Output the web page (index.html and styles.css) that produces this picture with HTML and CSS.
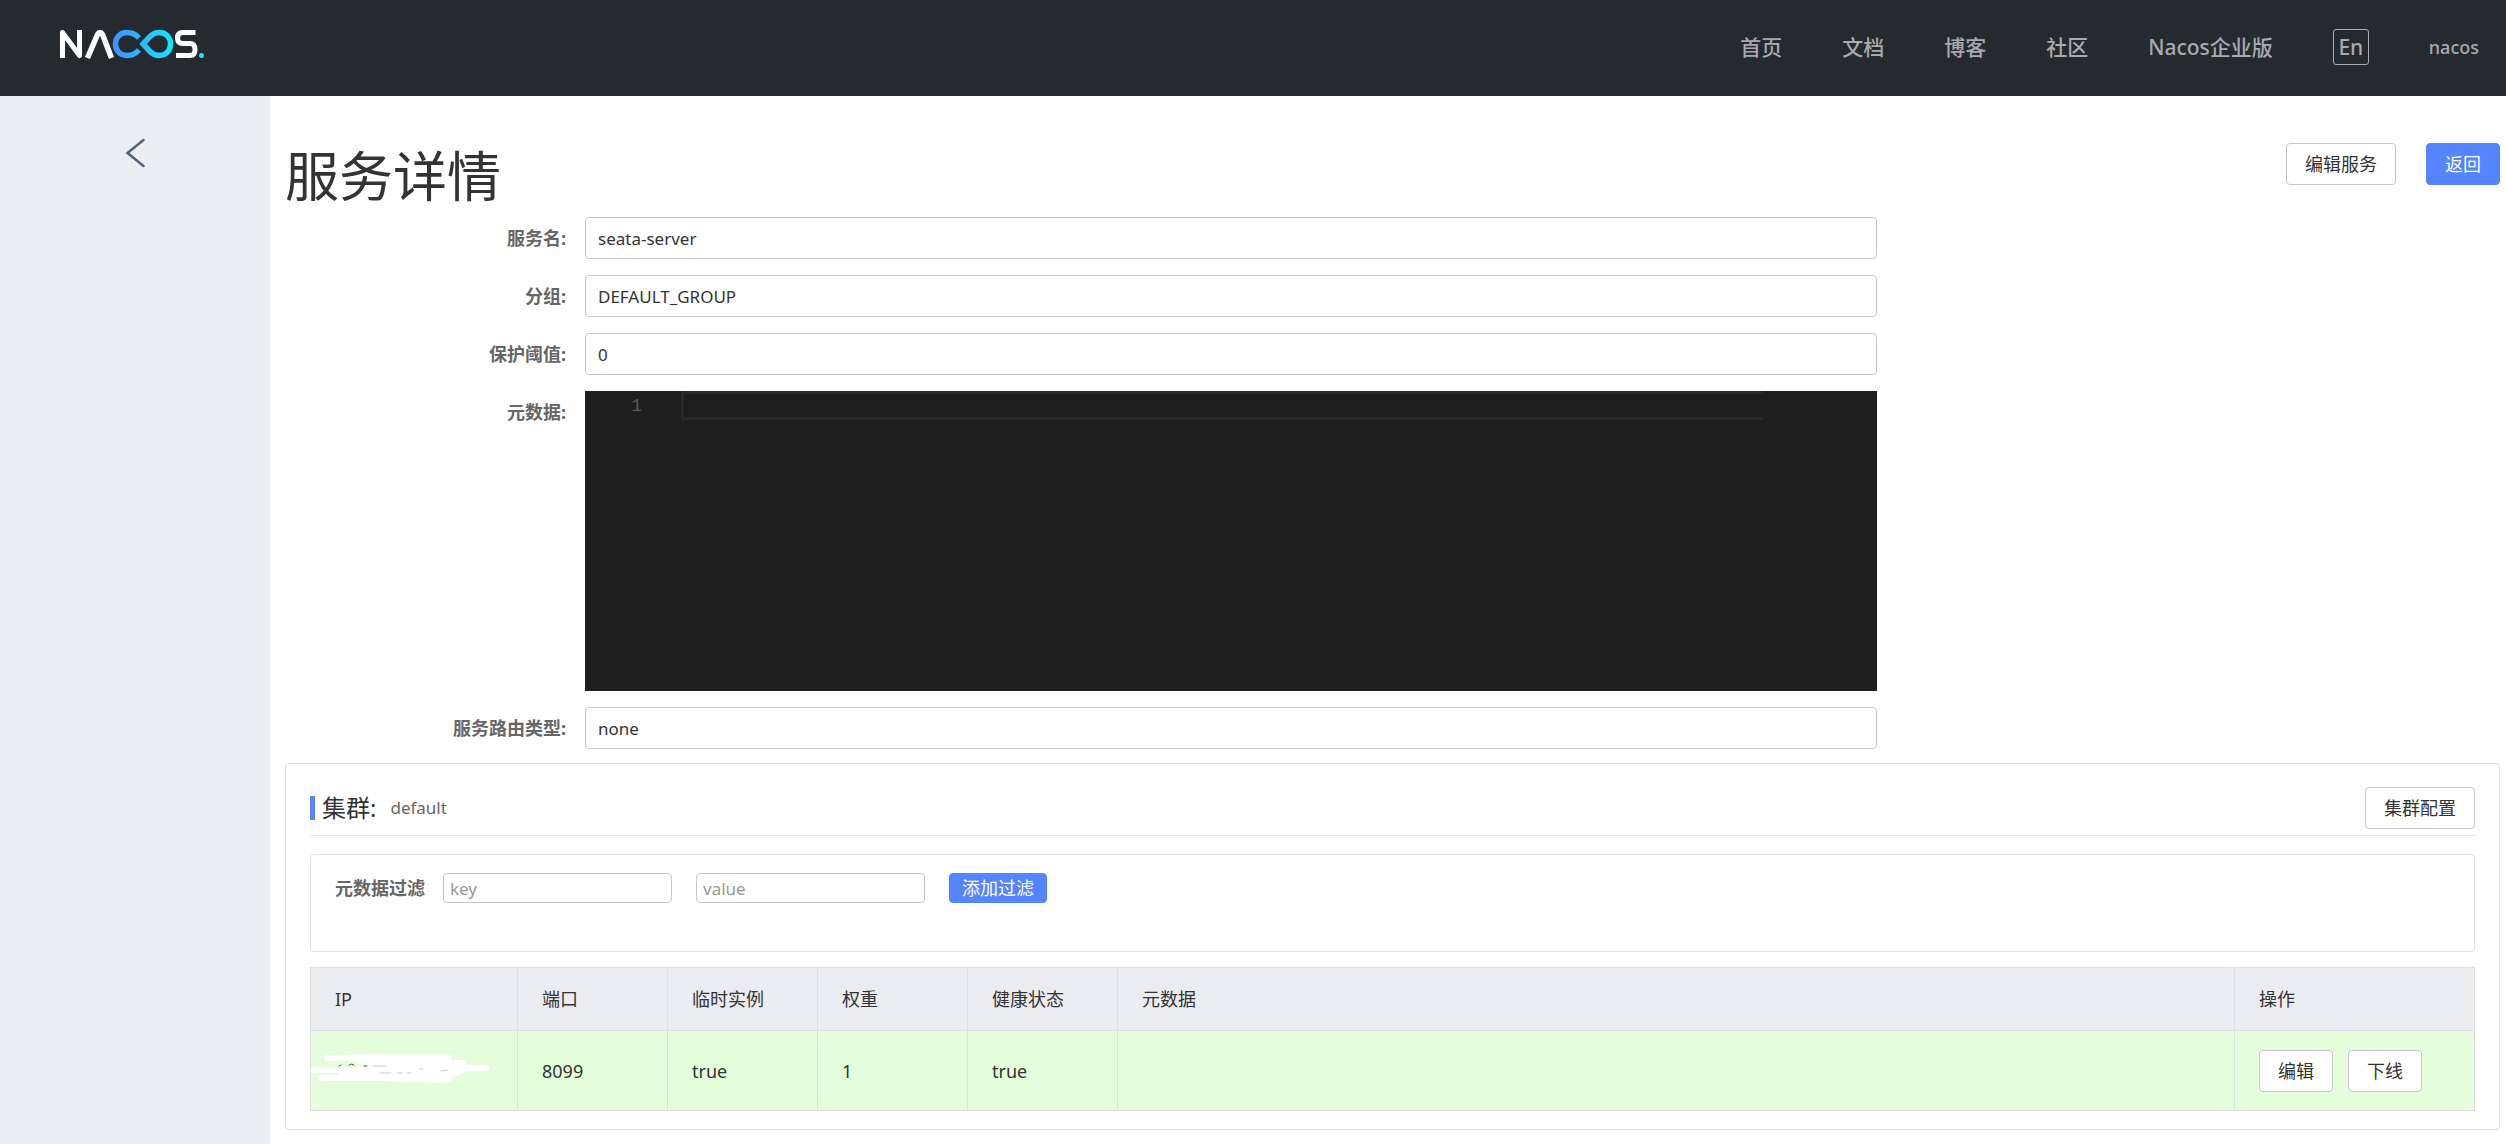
FILE: index.html
```html
<!DOCTYPE html>
<html lang="zh-CN">
<head>
  <meta charset="UTF-8">
  <meta name="viewport" content="width=device-width, initial-scale=1.0">
  <title>Nacos</title>
  <link rel="stylesheet" href="styles.css">
</head>
<body>
  <header class="header">
    <a href="#" class="logo" aria-label="NACOS.">
      <svg width="146" height="32" viewBox="0 0 146 32" fill="none" stroke-width="5">
        <defs>
          <linearGradient id="loop" gradientUnits="userSpaceOnUse" x1="53" y1="0" x2="113" y2="0">
            <stop offset="0" stop-color="#4190ff"/>
            <stop offset="1" stop-color="#16e4fb"/>
          </linearGradient>
        </defs>
        <g stroke="#fff" stroke-linejoin="round">
          <path d="M2.500 30V4.500L19.500 27.500V2"/>
          <path stroke-width="5.500" d="M27.500 30L37.500 6.500Q40 2.500 42.500 6.500L51.500 30"/>
          <path d="M135.500 4.500H123Q117.500 4.500 117.500 10T123 15.500H130Q135 15.500 135 21.500T130 27.500H116"/>
        </g>
        <g stroke="url(#loop)" stroke-width="5.500">
          <path d="M79 10Q74 4.500 67 4.500C59.500 4.500 55.500 10 55.500 16S59.500 27.500 67 27.500Q74 27.500 79 22"/>
          <path d="M83 16L90 8.500Q94 4.500 99 4.500C106.500 4.500 110.500 10 110.500 16S106.500 27.500 99 27.500Q94 27.500 90 23.500Z"/>
        </g>
        <circle cx="141.500" cy="27.500" r="2.500" fill="#16e4fb"/>
      </svg>
    </a>
    <nav class="nav">
      <a href="#">首页</a>
      <a href="#">文档</a>
      <a href="#">博客</a>
      <a href="#">社区</a>
      <a href="#">Nacos企业版</a>
      <button type="button" class="lang">En</button>
      <a href="#" class="user">nacos</a>
    </nav>
  </header>

  <div class="layout">
    <aside class="sidebar">
      <button type="button" class="back" aria-label="返回">
        <svg width="20" height="30" viewBox="0 0 20 30" fill="none" stroke="#546478" stroke-width="2.500" stroke-linecap="round">
          <path d="M18.500 2L2.500 15L18.500 28"/>
        </svg>
      </button>
    </aside>

    <main class="main">
      <div class="title-bar">
        <h1>服务详情</h1>
        <div class="title-actions">
          <button type="button" class="btn">编辑服务</button>
          <button type="button" class="btn btn-primary">返回</button>
        </div>
      </div>

      <form class="form">
        <label for="service-name">服务名:</label>
        <input type="text" id="service-name" value="seata-server" readonly>
        <label for="group-name">分组:</label>
        <input type="text" id="group-name" value="DEFAULT_GROUP" readonly>
        <label for="threshold">保护阈值:</label>
        <input type="text" id="threshold" value="0" readonly>
        <label for="metadata">元数据:</label>
        <div class="editor">
          <span class="line-number">1</span>
          <textarea id="metadata" class="current-line" rows="1" readonly></textarea>
        </div>
        <label for="selector">服务路由类型:</label>
        <input type="text" id="selector" value="none" readonly>
      </form>

      <section class="cluster">
        <div class="cluster-head">
          <h2>集群:</h2>
          <span class="cluster-name">default</span>
          <button type="button" class="btn">集群配置</button>
        </div>

        <form class="filter">
          <label for="filter-key">元数据过滤</label>
          <input type="text" id="filter-key" placeholder="key">
          <input type="text" id="filter-value" placeholder="value" aria-label="value">
          <button type="button" class="btn btn-primary btn-small">添加过滤</button>
        </form>

        <table>
          <colgroup>
            <col class="col-ip">
            <col class="col-small">
            <col class="col-small">
            <col class="col-small">
            <col class="col-small">
            <col>
            <col class="col-actions">
          </colgroup>
          <thead>
            <tr>
              <th>IP</th>
              <th>端口</th>
              <th>临时实例</th>
              <th>权重</th>
              <th>健康状态</th>
              <th>元数据</th>
              <th>操作</th>
            </tr>
          </thead>
          <tbody>
            <tr>
              <td class="ip">
                <svg class="redacted" width="182" height="34" viewBox="0 0 182 34" fill="none" stroke-linecap="round" stroke-linejoin="round">
                  <path fill="#fff" d="M30 6L60 14L28 16V24L100 27L140 26L156 19L162 13L140 10V6Z"/>
                  <path stroke="#fff" stroke-width="6" d="M16 6L70 5L138 5M48 9L110 12L152 11M0 18H30L90 18L176 16M11 26H70L138 28"/>
                  <path stroke="#555" stroke-width="1" d="M28 14L30 13M38 13Q40 11 43 13M53 14H56"/>
                  <path stroke="#ccc" stroke-width="1" d="M62 14H75M69 21H80M86 21H91M96 21H100M109 17H112M130 19L137 18"/>
                </svg>
              </td>
              <td>8099</td>
              <td>true</td>
              <td>1</td>
              <td>true</td>
              <td></td>
              <td>
                <div class="row-actions">
                  <button type="button" class="btn">编辑</button>
                  <button type="button" class="btn">下线</button>
                </div>
              </td>
            </tr>
          </tbody>
        </table>
      </section>
    </main>
  </div>
</body>
</html>
```
FILE: styles.css
```css
* {
  box-sizing: border-box;
}

body {
  display: flex;
  flex-direction: column;
  min-height: 100vh;
  margin: 0;
  font-family: "Noto Sans", "Noto Sans CJK SC", sans-serif;
  font-size: 18px;
  line-height: 24px;
  color: #333;
  background-color: #fff;
}

a {
  color: inherit;
  text-decoration: none;
}

input,
button,
textarea {
  font: inherit;
  color: inherit;
}

/* header */
.header {
  display: flex;
  align-items: center;
  justify-content: space-between;
  height: 96px;
  padding: 0 27px 2px 60px;
  background-color: #252a2f;
}

.logo {
  padding-bottom: 6px;
}

.logo svg {
  display: block;
}

.nav {
  display: flex;
  align-items: center;
  gap: 60px;
  font-size: 21px;
  font-weight: 500;
  color: #a8aaac;
}

.lang {
  width: 36px;
  height: 36px;
  padding: 0;
  border: 1px solid #a8aaac;
  border-radius: 3px;
  background: none;
}

.user {
  font-size: 18px;
}

/* layout */
.layout {
  display: flex;
  flex: 1;
}

.sidebar {
  width: 270px;
  padding-top: 42px;
  background-color: #eaedf1;
  text-align: center;
}

.back {
  padding: 0;
  border: 0;
  background: none;
}

.back svg {
  display: block;
}

.main {
  flex: 1;
  padding: 42px 6px 12px 15px;
}

.title-bar {
  display: flex;
  justify-content: space-between;
  height: 79px;
}

h1 {
  margin: 0;
  font-size: 54px;
  font-weight: 400;
  line-height: 76px;
}

.title-actions {
  display: flex;
  gap: 30px;
  padding-top: 5px;
}

.btn {
  height: 42px;
  padding: 0 18px;
  border: 1px solid #c4c6cf;
  border-radius: 4px;
  background-color: #fff;
}

.btn-primary {
  border-color: #5584ff;
  background-color: #5584ff;
  color: #fff;
}

.btn-small {
  height: 30px;
  padding: 0 12px;
}

/* service form */
.form {
  display: grid;
  grid-template-columns: 281px minmax(0, 1292px);
  gap: 16px 19px;
  margin-bottom: 14px;
}

.form label {
  padding-top: 9px;
  text-align: right;
}

label {
  font-weight: 700;
  color: #666;
}

.form input {
  height: 42px;
  padding: 0 12px;
}

input {
  border: 1px solid #c4c6cf;
  border-radius: 4px;
  font-size: 17px;
}

.editor {
  display: flex;
  height: 300px;
  padding-right: 114px;
  background-color: #1e1e1e;
  font-family: "Liberation Mono", monospace;
}

.line-number {
  width: 96px;
  padding: 3px 39px 0 0;
  color: #5a5a5a;
  text-align: right;
}

.current-line {
  flex: 1;
  height: 29px;
  padding: 0;
  border: 3px solid #282828;
  border-right: 0;
  background: none;
  color: #d4d4d4;
  resize: none;
}

/* cluster card */
.cluster {
  padding: 23px 24px 18px;
  border: 1px solid #dcdee3;
  border-radius: 4px;
}

.cluster-head {
  display: flex;
  align-items: center;
  padding-bottom: 6px;
  margin-bottom: 18px;
  border-bottom: 1px solid #e6e7eb;
}

h2 {
  margin: 0 14px 0 0;
  padding-left: 7px;
  border-left: 5px solid #5584ff;
  font-size: 24px;
  font-weight: 400;
  line-height: 24px;
}

.cluster-name {
  font-size: 17px;
  color: #666;
}

.cluster-head .btn {
  margin-left: auto;
}

.filter {
  display: flex;
  align-items: flex-start;
  gap: 24px;
  height: 98px;
  margin-bottom: 15px;
  padding: 18px 24px;
  border: 1px solid #dcdee3;
  border-radius: 4px;
}

.filter label {
  margin-right: -6px;
  line-height: 30px;
}

.filter input {
  width: 229px;
  height: 30px;
  padding: 0 6px;
}

::placeholder {
  color: #999;
}

/* instance table */
table {
  width: 100%;
  border-collapse: collapse;
  table-layout: fixed;
}

th,
td {
  padding: 0 24px;
  border: 1px solid #dcdee3;
  text-align: left;
}

th {
  height: 63px;
  background-color: #ebecf0;
  font-weight: 400;
}

td {
  height: 80px;
  background-color: #e4fdda;
}

.col-ip {
  width: 207px;
}

.col-small {
  width: 150px;
}

.col-actions {
  width: 240px;
}

.ip {
  padding: 0 0 4px;
}

.redacted {
  display: block;
}

.row-actions {
  display: flex;
  gap: 15px;
}
```
